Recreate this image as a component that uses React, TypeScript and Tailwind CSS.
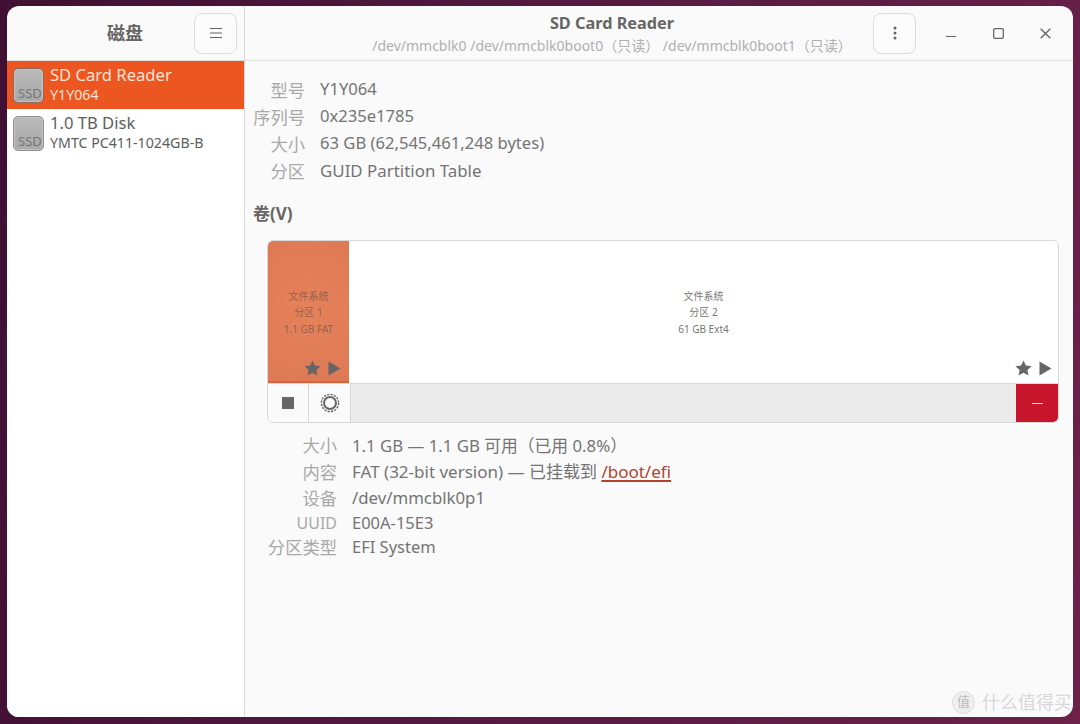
import React from "react";

const F = "font-['Noto_Sans','Noto_Sans_CJK_SC',sans-serif]";

function DiskIcon({ selected }: { selected?: boolean }) {
  return (
    <div className={`relative w-[31px] h-[35px] rounded-[5px] border ${selected ? "border-[#8a6a5c]" : "border-[#8f8f8f]"} bg-[linear-gradient(#b9b9b9,#a9a9a9)] shadow-[inset_0_0_0_1px_#c4c4c4] overflow-hidden shrink-0`}>
      <span className="absolute left-[4px] bottom-[1px] text-[13px] leading-[16px] text-[#777]">SSD</span>
    </div>
  );
}

function SidebarRow({ title, sub, selected }: { title: string; sub: string; selected?: boolean }) {
  return (
    <div className={`h-[48px] flex items-center pl-[6px] gap-[6px] ${selected ? "bg-[#ec5620] text-[#fde3d8]" : "text-[#5d5d5d]"}`}>
      <DiskIcon selected={selected} />
      <div className="flex flex-col pb-[2px]">
        <span className="text-[16.6px] leading-[22px] whitespace-nowrap">{title}</span>
        <span className="text-[14.2px] leading-[18px] whitespace-nowrap">{sub}</span>
      </div>
    </div>
  );
}

function HeaderButton({ children }: { children: React.ReactNode }) {
  return (
    <div className="w-[43px] h-[41px] rounded-[8px] border border-[#dcdcdc] bg-[#fbfbfb] flex items-center justify-center shrink-0">
      {children}
    </div>
  );
}

function InfoRow({ label, value, w, h, size, labelClass }: { label: string; value: React.ReactNode; w: string; h: string; size: string; labelClass?: string }) {
  return (
    <div className={`flex items-center gap-[15px] ${h}`}>
      <span className={`${w} text-right whitespace-nowrap text-[#a9a9a9] text-[17.3px] ${labelClass ?? "pt-[2px]"}`}>{label}</span>
      <span className={`text-[#747474] ${size} whitespace-nowrap`}>{value}</span>
    </div>
  );
}

function PartitionMarks({ pos }: { pos: string }) {
  return (
    <div className={`absolute ${pos} flex items-center gap-[7px]`}>
      <svg width="17" height="16" viewBox="0 0 17 16"><path d="M8.5 0.5l2.4 5.1 5.6.7-4.1 3.8 1.1 5.5-5-2.8-5 2.8 1.1-5.5L.5 6.3l5.6-.7z" fill="#666" /></svg>
      <svg width="13" height="15" viewBox="0 0 13 15"><path d="M0.5 0.5L12.5 7.5L0.5 14.5z" fill="#666" /></svg>
    </div>
  );
}

function PartitionText({ lines, tone }: { lines: string[]; tone: string }) {
  return (
    <div className={`flex flex-col items-center text-[10px] leading-[16.5px] ${tone}`}>
      {lines.map((l) => <span key={l} className="whitespace-nowrap">{l}</span>)}
    </div>
  );
}

export default function App() {
  return (
    <div className={`relative w-[1080px] h-[724px] overflow-hidden pt-[6px] px-[7px] pb-[7px] bg-[linear-gradient(100deg,#3f1033,#5a1c44_60%,#6b2148)] ${F}`}>
      <div className="h-full flex flex-col rounded-[12px] overflow-hidden bg-[#fafafa]">
        <header className="h-[55px] flex border-b border-[#e0e0e0] shrink-0">
          <div className="w-[238px] border-r border-[#d9d9d9] flex items-center pr-[7px]">
            <span className="flex-1 pl-[49px] text-center text-[18px] font-bold text-[#666]">磁盘</span>
            <HeaderButton>
              <svg width="14" height="12" viewBox="0 0 14 12" stroke="#666" strokeWidth="1.2"><path d="M1 1.5h12M1 6h12M1 10.5h12" /></svg>
            </HeaderButton>
          </div>
          <div className="flex-1 flex items-center">
            <div className="flex-1 flex flex-col items-center pl-[106px] pt-[1px]">
              <span className="text-[16.3px] leading-[24px] font-bold text-[#666]">SD Card Reader</span>
              <span className="text-[14px] leading-[22px] text-[#b0b0b0] whitespace-nowrap">/dev/mmcblk0 /dev/mmcblk0boot0（只读） /dev/mmcblk0boot1（只读）</span>
            </div>
            <HeaderButton>
              <svg width="4" height="14" viewBox="0 0 4 14" fill="#666"><circle cx="2" cy="2" r="1.5" /><circle cx="2" cy="7" r="1.5" /><circle cx="2" cy="12" r="1.5" /></svg>
            </HeaderButton>
            <div className="flex items-center w-[157px] pl-[30px] pr-[22px] justify-between">
              <svg width="10" height="10" viewBox="0 0 10 10" stroke="#666" strokeWidth="1.2"><path d="M0 8.5h10" /></svg>
              <svg width="11" height="11" viewBox="0 0 11 11" stroke="#666" strokeWidth="1.3" fill="none"><rect x="0.7" y="0.7" width="9.6" height="9.6" rx="1" /></svg>
              <svg width="11" height="11" viewBox="0 0 11 11" stroke="#666" strokeWidth="1.4"><path d="M.7.7l9.6 9.6M10.3.7L.7 10.3" /></svg>
            </div>
          </div>
        </header>

        <div className="flex-1 flex min-h-0">
          <aside className="w-[238px] border-r border-[#d9d9d9] bg-white shrink-0">
            <SidebarRow title="SD Card Reader" sub="Y1Y064" selected />
            <SidebarRow title="1.0 TB Disk" sub="YMTC PC411-1024GB-B" />
          </aside>

          <main className="flex-1 pt-[15px] pl-[8px] pr-[14px]">
            <div className="flex flex-col">
              <InfoRow label="型号" value="Y1Y064" w="w-[52px]" h="h-[27px]" size="text-[16.6px]" />
              <InfoRow label="序列号" value="0x235e1785" w="w-[52px]" h="h-[27px]" size="text-[16.6px]" />
              <InfoRow label="大小" value="63 GB (62,545,461,248 bytes)" w="w-[52px]" h="h-[27px]" size="text-[16.6px]" />
              <InfoRow label="分区" value="GUID Partition Table" w="w-[52px]" h="h-[27px]" size="text-[16.9px]" />
            </div>
            <div className="mt-[18px] text-[17px] font-bold leading-[24px] text-[#666]">卷(V)</div>
            <div className="mt-[14px] ml-[14px] h-[183px] rounded-[6px] border border-[#d9d9d9] overflow-hidden flex flex-col bg-white">
              <div className="h-[142px] flex shrink-0">
                <div className="relative w-[81px] pt-[3px] flex items-center justify-center bg-[radial-gradient(circle,#e5825a,#dd7a55)] border-b-2 border-[#d4663c]">
                  <PartitionText lines={["文件系统", "分区 1", "1.1 GB FAT"]} tone="text-[#96624d]" />
                  <PartitionMarks pos="right-[8px] bottom-[5px]" />
                </div>
                <div className="relative flex-1 pt-[1px] flex items-center justify-center">
                  <PartitionText lines={["文件系统", "分区 2", "61 GB Ext4"]} tone="text-[#777]" />
                  <PartitionMarks pos="right-[6px] bottom-[7px]" />
                </div>
              </div>
              <div className="flex-1 flex border-t border-[#d9d9d9]">
                <div className="w-[41px] flex items-center justify-center border-r border-[#d9d9d9] bg-[#fafafa]">
                  <div className="w-[12px] h-[12px] bg-[#666]" />
                </div>
                <div className="w-[42px] flex items-center justify-center border-r border-[#d9d9d9] bg-[#fafafa]">
                  <svg width="20" height="20" viewBox="0 0 20 20" fill="none" stroke="#666">
                    <circle cx="10" cy="10" r="6" strokeWidth="2" />
                    <circle cx="10" cy="10" r="8.6" strokeWidth="1.4" strokeDasharray="2.2 1.2" />
                  </svg>
                </div>
                <div className="flex-1 bg-[#ebebeb]" />
                <div className="w-[42px] flex items-center justify-center bg-[#c7162b]">
                  <div className="w-[11px] h-px bg-[#f5d5d9]" />
                </div>
              </div>
            </div>
            <div className="mt-[10px] ml-[14px] flex flex-col">
              <InfoRow label="大小" value="1.1 GB — 1.1 GB 可用（已用 0.8%）" w="w-[70px]" h="h-[26px]" size="text-[16.8px]" labelClass="pt-0" />
              <InfoRow label="内容" value={<>FAT (32-bit version) — 已挂载到 <span className="text-[#b0452a] underline decoration-[1.5px] underline-offset-2">/boot/efi</span></>} w="w-[70px]" h="h-[26px]" size="text-[17px]" labelClass="pt-[1px]" />
              <InfoRow label="设备" value="/dev/mmcblk0p1" w="w-[70px]" h="h-[26px]" size="text-[16.8px]" labelClass="pt-[2px]" />
              <InfoRow label="UUID" value="E00A-15E3" w="w-[70px]" h="h-[24px]" size="text-[16.5px]" labelClass="!text-[16px]" />
              <InfoRow label="分区类型" value="EFI System" w="w-[70px]" h="h-[24px]" size="text-[16.5px]" labelClass="pt-[1px]" />
            </div>
          </main>
        </div>
      </div>

      <div className="absolute left-[952px] top-[690px] flex items-center gap-[7px]">
        <div className="w-[23px] h-[23px] rounded-full border border-[#ddd] bg-[#efefef] flex items-center justify-center text-[13px] text-[#bbb]">值</div>
        <span className="text-[18px] leading-[24px] text-[#d8d8d8] whitespace-nowrap">什么值得买</span>
      </div>
    </div>
  );
}
